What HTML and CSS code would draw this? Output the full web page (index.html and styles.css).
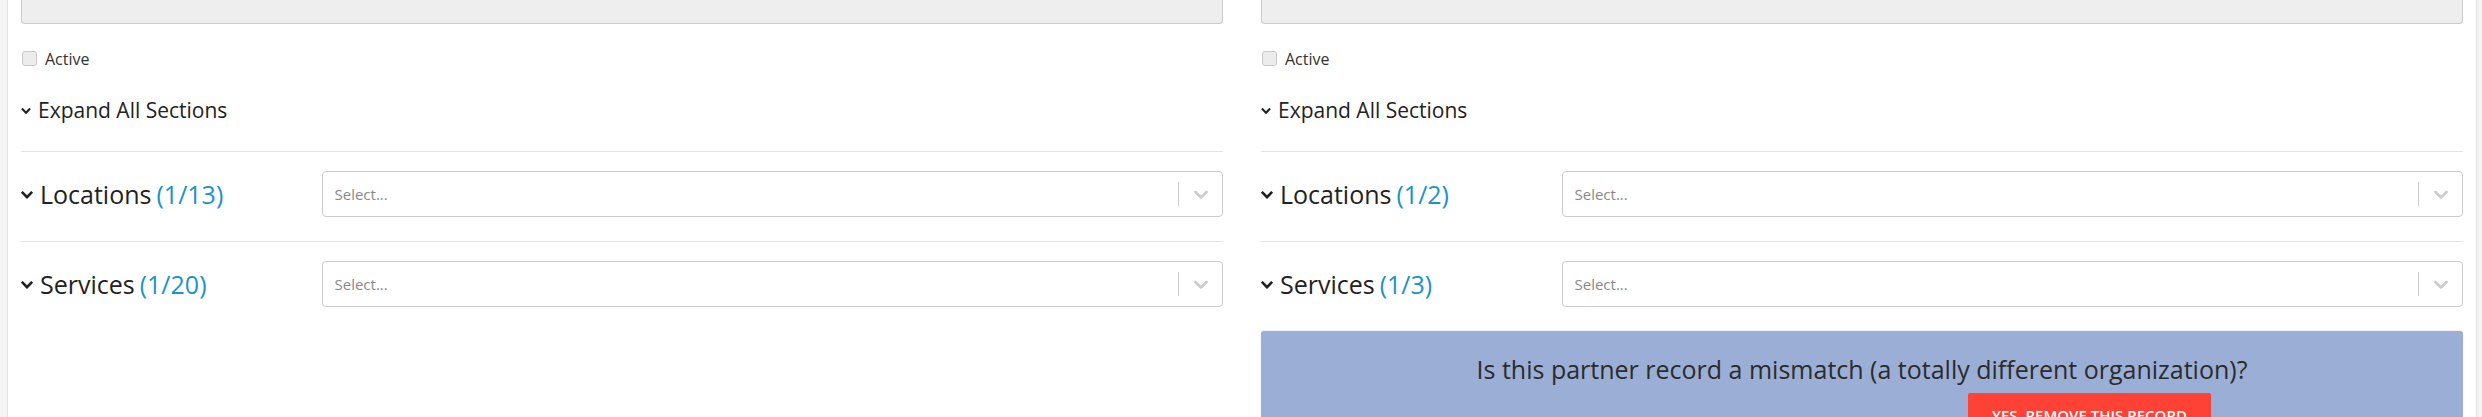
FILE: index.html
```html
<!DOCTYPE html>
<html lang="en">
<head>
    <meta charset="UTF-8">
    <meta name="viewport" content="width=device-width, initial-scale=1.0">
    <title>Partner Merge</title>
    <link rel="stylesheet" href="styles.css">
</head>
<body>
    <div class="page">
        <div class="merge-grid">
            <!-- left record -->
            <section class="record">
                <div class="field-readonly"></div>
                <label class="check">
                    <input type="checkbox" disabled>
                    <span>Active</span>
                </label>
                <div class="expand-all">
                    <svg class="chev chev-sm" viewBox="90 550 1612 1020"><path d="M1683 808l-742 741q-19 19-45 19t-45-19l-742-741q-19-19-19-45.5t19-45.5l166-165q19-19 45-19t45 19l531 531 531-531q19-19 45-19t45 19l166 165q19 19 19 45.5t-19 45.5z"/></svg>
                    Expand All Sections
                </div>
                <div class="section-row">
                    <div class="section-title">
                        <svg class="chev" viewBox="90 550 1612 1020"><path d="M1683 808l-742 741q-19 19-45 19t-45-19l-742-741q-19-19-19-45.5t19-45.5l166-165q19-19 45-19t45 19l531 531 531-531q19-19 45-19t45 19l166 165q19 19 19 45.5t-19 45.5z"/></svg>
                        Locations <span class="count">(1/13)</span>
                    </div>
                    <div class="select">
                        <span class="placeholder">Select...</span>
                        <span class="select-sep"></span>
                        <span class="select-arrow">
                            <svg viewBox="0 0 20 20"><path d="M4.516 7.548c0.436-0.446 1.043-0.481 1.576 0l3.908 3.747 3.908-3.747c0.533-0.481 1.141-0.446 1.574 0 0.436 0.445 0.408 1.197 0 1.615-0.406 0.418-4.695 4.502-4.695 4.502-0.217 0.223-0.502 0.335-0.787 0.335s-0.57-0.112-0.789-0.335c0 0-4.287-4.084-4.695-4.502s-0.436-1.17 0-1.615z"/></svg>
                        </span>
                    </div>
                </div>
                <div class="section-row">
                    <div class="section-title">
                        <svg class="chev" viewBox="90 550 1612 1020"><path d="M1683 808l-742 741q-19 19-45 19t-45-19l-742-741q-19-19-19-45.5t19-45.5l166-165q19-19 45-19t45 19l531 531 531-531q19-19 45-19t45 19l166 165q19 19 19 45.5t-19 45.5z"/></svg>
                        Services <span class="count">(1/20)</span>
                    </div>
                    <div class="select">
                        <span class="placeholder">Select...</span>
                        <span class="select-sep"></span>
                        <span class="select-arrow">
                            <svg viewBox="0 0 20 20"><path d="M4.516 7.548c0.436-0.446 1.043-0.481 1.576 0l3.908 3.747 3.908-3.747c0.533-0.481 1.141-0.446 1.574 0 0.436 0.445 0.408 1.197 0 1.615-0.406 0.418-4.695 4.502-4.695 4.502-0.217 0.223-0.502 0.335-0.787 0.335s-0.57-0.112-0.789-0.335c0 0-4.287-4.084-4.695-4.502s-0.436-1.17 0-1.615z"/></svg>
                        </span>
                    </div>
                </div>
            </section>

            <!-- right record -->
            <section class="record">
                <div class="field-readonly"></div>
                <label class="check">
                    <input type="checkbox" disabled>
                    <span>Active</span>
                </label>
                <div class="expand-all">
                    <svg class="chev chev-sm" viewBox="90 550 1612 1020"><path d="M1683 808l-742 741q-19 19-45 19t-45-19l-742-741q-19-19-19-45.5t19-45.5l166-165q19-19 45-19t45 19l531 531 531-531q19-19 45-19t45 19l166 165q19 19 19 45.5t-19 45.5z"/></svg>
                    Expand All Sections
                </div>
                <div class="section-row">
                    <div class="section-title">
                        <svg class="chev" viewBox="90 550 1612 1020"><path d="M1683 808l-742 741q-19 19-45 19t-45-19l-742-741q-19-19-19-45.5t19-45.5l166-165q19-19 45-19t45 19l531 531 531-531q19-19 45-19t45 19l166 165q19 19 19 45.5t-19 45.5z"/></svg>
                        Locations <span class="count">(1/2)</span>
                    </div>
                    <div class="select">
                        <span class="placeholder">Select...</span>
                        <span class="select-sep"></span>
                        <span class="select-arrow">
                            <svg viewBox="0 0 20 20"><path d="M4.516 7.548c0.436-0.446 1.043-0.481 1.576 0l3.908 3.747 3.908-3.747c0.533-0.481 1.141-0.446 1.574 0 0.436 0.445 0.408 1.197 0 1.615-0.406 0.418-4.695 4.502-4.695 4.502-0.217 0.223-0.502 0.335-0.787 0.335s-0.57-0.112-0.789-0.335c0 0-4.287-4.084-4.695-4.502s-0.436-1.17 0-1.615z"/></svg>
                        </span>
                    </div>
                </div>
                <div class="section-row">
                    <div class="section-title">
                        <svg class="chev" viewBox="90 550 1612 1020"><path d="M1683 808l-742 741q-19 19-45 19t-45-19l-742-741q-19-19-19-45.5t19-45.5l166-165q19-19 45-19t45 19l531 531 531-531q19-19 45-19t45 19l166 165q19 19 19 45.5t-19 45.5z"/></svg>
                        Services <span class="count">(1/3)</span>
                    </div>
                    <div class="select">
                        <span class="placeholder">Select...</span>
                        <span class="select-sep"></span>
                        <span class="select-arrow">
                            <svg viewBox="0 0 20 20"><path d="M4.516 7.548c0.436-0.446 1.043-0.481 1.576 0l3.908 3.747 3.908-3.747c0.533-0.481 1.141-0.446 1.574 0 0.436 0.445 0.408 1.197 0 1.615-0.406 0.418-4.695 4.502-4.695 4.502-0.217 0.223-0.502 0.335-0.787 0.335s-0.57-0.112-0.789-0.335c0 0-4.287-4.084-4.695-4.502s-0.436-1.17 0-1.615z"/></svg>
                        </span>
                    </div>
                </div>
                <div class="mismatch">
                    <p class="mismatch-question">Is this partner record a mismatch (a totally different organization)?</p>
                    <div class="mismatch-actions">
                        <button class="btn-remove">Yes, remove this record</button>
                    </div>
                </div>
            </section>
        </div>
    </div>
</body>
</html>
```

FILE: styles.css
```css
body {
    font-family: "Open Sans", "Noto Sans", sans-serif;
    color: #333;
    margin: 0;
    padding: 0 5px 0 7px;
    background-color: #f4f4f4;
    overflow: hidden;
}
.page {
    background-color: white;
    border-left: 1px solid #e2e2e2;
    border-right: 1px solid #e2e2e2;
    padding: 0 13px;
    min-height: 417px;
}
.merge-grid {
    display: grid;
    grid-template-columns: 1fr 1fr;
    column-gap: 38px;
    margin-top: -35px;
}
.record {
    display: flex;
    flex-direction: column;
}
.field-readonly {
    height: 58px;
    background-color: #eee;
    border: 1px solid #ccc;
    border-top: none;
    border-radius: 0 0 4px 4px;
}
.check {
    display: flex;
    align-items: center;
    gap: 8px;
    height: 15px;
    margin-top: 27px;
    font-size: 16px;
}
.check input {
    appearance: none;
    width: 15px;
    height: 15px;
    margin: 0 0 0 1px;
    border: 1px solid #c9c9c9;
    border-radius: 3px;
    background-color: #ececec;
}
.expand-all {
    display: flex;
    align-items: center;
    gap: 7px;
    font-size: 21px;
    line-height: 30px;
    margin-top: 29px;
    padding-bottom: 26px;
    color: #222;
}
.chev {
    width: 12px;
    height: 8px;
    fill: #222;
    flex-shrink: 0;
}
.chev-sm {
    width: 10px;
    height: 6px;
    margin-top: 2px;
}
.section-row {
    display: grid;
    grid-template-columns: 1fr 3fr;
    align-items: center;
    border-top: 1px solid #e3e3e3;
    padding: 19px 0 24px;
}
.section-title {
    display: flex;
    align-items: center;
    font-size: 25px;
    color: #222;
}
.section-title .chev {
    margin-right: 7px;
    margin-top: 2px;
}
.count {
    color: #1b93c6;
    margin-left: 5px;
}
.select {
    display: flex;
    align-items: center;
    height: 46px;
    box-sizing: border-box;
    border: 1px solid #ccc;
    border-radius: 4px;
    background-color: white;
}
.placeholder {
    flex: 1;
    padding-left: 12px;
    font-size: 15px;
    color: #888;
}
.select-sep {
    width: 1px;
    height: 24px;
    background-color: #ccc;
}
.select-arrow {
    display: flex;
    justify-content: center;
    width: 43px;
}
.select-arrow svg {
    width: 24px;
    height: 24px;
    fill: #ccc;
}
.mismatch {
    background-color: #9bafd6;
    border-radius: 3px 3px 0 0;
    padding: 20px 20px 30px;
    box-shadow: 0 -1px 2px rgba(0,0,0,0.08);
}
.mismatch-question {
    margin: 0;
    text-align: center;
    font-size: 25px;
    line-height: 36px;
    color: #2b2b2b;
}
.mismatch-actions {
    margin-top: 6px;
    padding-left: 687px;
}
.btn-remove {
    font-family: inherit;
    font-size: 15px;
    font-weight: 600;
    text-transform: uppercase;
    color: white;
    background-color: #ff4136;
    border: none;
    border-radius: 2px;
    padding: 12px 20px;
    width: 243px;
}
```
